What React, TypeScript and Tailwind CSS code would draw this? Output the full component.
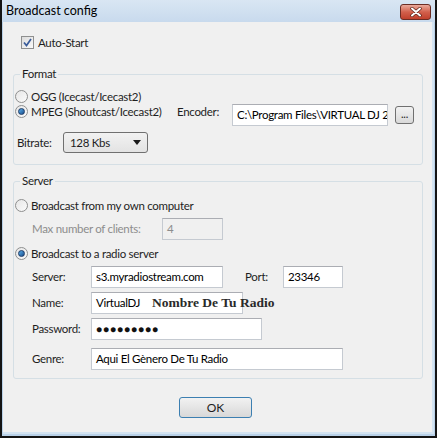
import React from 'react';

const font = { fontFamily: 'Lato, "Noto Sans", sans-serif' };

function Radio({ checked }: { checked?: boolean }) {
  return (
    <span className="w-[13px] h-[13px] rounded-full border border-[#8e8f8f] bg-gradient-to-br from-[#e6e6e6] to-[#fbfbfb] flex items-center justify-center shrink-0">
      {checked && (
        <span className="w-[7px] h-[7px] rounded-full bg-gradient-to-br from-[#5ab0ec] to-[#1b4e8c] border border-[#1c3a66]" />
      )}
    </span>
  );
}

function Field({ w, children, disabled }: { w: string; children?: React.ReactNode; disabled?: boolean }) {
  return (
    <div
      className={`${w} h-[22px] border border-[#c5cad1] border-t-[#abadb3] flex items-center pl-[4px] overflow-hidden whitespace-nowrap shrink-0 ${
        disabled ? 'bg-[#f0f0f0] text-[#8d8d8d]' : 'bg-white text-black'
      }`}
    >
      {children}
    </div>
  );
}

function Group({ label, className, children }: { label: string; className: string; children: React.ReactNode }) {
  return (
    <div className={`relative ml-[10px] w-[410px] border border-[#d5dfe5] rounded-[3px] ${className}`}>
      <span className="absolute -top-[9px] left-[6px] bg-[#f0f0f0] px-[2px] leading-[16px]">{label}</span>
      {children}
    </div>
  );
}

export default function App() {
  return (
    <div
      className="w-[437px] h-[438px] bg-[#141414] pl-[2px] pr-[2px] pb-[2px] text-[11.5px] tracking-[-0.3px] text-[#1e1e1e] whitespace-nowrap"
      style={font}
    >
      <div className="w-full h-full bg-[#b9d1e8] flex flex-col pl-[1px] pr-[1px] pb-[2px]">
        {/* title bar */}
        <div className="h-[22px] -ml-[1px] -mr-[1px] bg-gradient-to-b from-[#d9e6f3] to-[#c8daed] flex items-center justify-between pl-[4px] pr-[4px] shrink-0">
          <span className="text-[12.5px] tracking-normal text-black leading-none">Broadcast config</span>
          <span className="w-[31px] h-[16px] mt-[1px] rounded-[3px] border border-[#6b2d24] bg-gradient-to-b from-[#e9a99b] via-[#d2604c] to-[#c0402c] flex items-center justify-center">
            <svg width="12" height="10" viewBox="0 0 12 10">
              <path d="M2 1.5 L10 8.5 M10 1.5 L2 8.5" stroke="#5b2219" strokeWidth="3.4" strokeLinecap="round" />
              <path d="M2 1.5 L10 8.5 M10 1.5 L2 8.5" stroke="#ffffff" strokeWidth="2" strokeLinecap="round" />
            </svg>
          </span>
        </div>

        {/* client area */}
        <div className="flex-1 bg-[#f0f0f0] border-r-[2px] border-b-[2px] border-[#d3e3f1] flex flex-col">
          <div className="flex items-center gap-[4px] ml-[18px] mt-[14px] h-[13px]">
            <span className="w-[13px] h-[13px] border border-[#8e8f8f] bg-gradient-to-br from-[#dcdcdc] to-[#fafafa] flex items-center justify-center">
              <svg width="9" height="9" viewBox="0 0 9 9">
                <path d="M1 4.5 L3.5 7.5 L8 1" stroke="#3a5c9a" strokeWidth="1.7" fill="none" />
              </svg>
            </span>
            <span>Auto-Start</span>
          </div>

          <Group label="Format" className="mt-[25px] h-[91px]">
            <div className="flex items-center gap-[3px] ml-[1px] mt-[15px] h-[13px]">
              <Radio />
              <span>OGG (Icecast/Icecast2)</span>
            </div>
            <div className="flex items-start mt-[1px] h-[22px]">
              <div className="flex items-center gap-[3px] ml-[1px] mt-[1px] h-[13px] w-[162px] shrink-0">
                <Radio checked />
                <span>MPEG (Shoutcast/Icecast2)</span>
              </div>
              <span className="leading-[15px] w-[55px] shrink-0">Encoder:</span>
              <Field w="w-[156px]">C:\Program Files\VIRTUAL DJ 2</Field>
              <button className="ml-[7px] mt-[2px] w-[19px] h-[18px] shrink-0 rounded-[3px] border border-[#707070] bg-gradient-to-b from-[#f2f2f2] to-[#d9d9d9] text-[11px] leading-none pb-[4px]">
                ...
              </button>
            </div>
            <div className="flex items-center mt-[6px] h-[21px]">
              <span className="ml-[3px] w-[46px]">Bitrate:</span>
              <div className="w-[85px] h-[21px] rounded-[3px] border border-[#707070] bg-gradient-to-b from-[#f2f2f2] to-[#e3e3e3] flex items-center justify-between pl-[6px] pr-[6px]">
                <span>128 Kbs</span>
                <svg width="8" height="5" viewBox="0 0 8 5">
                  <path d="M0 0 H8 L4 5 Z" fill="#1a1a1a" />
                </svg>
              </div>
            </div>
          </Group>

          <Group label="Server" className="mt-[16px] h-[198px]">
            <div className="flex items-center gap-[3px] ml-[1px] mt-[17px] h-[13px]">
              <Radio />
              <span>Broadcast from my own computer</span>
            </div>
            <div className="flex items-center mt-[6px]">
              <span className="ml-[18px] w-[130px] text-[#8d8d8d]">Max number of clients:</span>
              <Field w="w-[61px]" disabled>
                4
              </Field>
            </div>
            <div className="flex items-center gap-[3px] ml-[1px] mt-[7px] h-[13px]">
              <Radio checked />
              <span>Broadcast to a radio server</span>
            </div>
            <div className="flex items-center mt-[6px]">
              <span className="ml-[18px] w-[59px]">Server:</span>
              <Field w="w-[132px]">s3.myradiostream.com</Field>
              <span className="ml-[22px] w-[38px]">Port:</span>
              <Field w="w-[60px]">23346</Field>
            </div>
            <div className="relative flex items-center mt-[4px]">
              <span className="ml-[18px] w-[59px]">Name:</span>
              <Field w="w-[152px]">VirtualDJ</Field>
              <span
                className="absolute left-[138px] top-[3px] text-[13.5px] tracking-normal font-bold text-[#2a2a2a] leading-[16px]"
                style={{ fontFamily: '"Liberation Serif", serif' }}
              >
                Nombre De Tu Radio
              </span>
            </div>
            <div className="flex items-center mt-[4px]">
              <span className="ml-[18px] w-[59px]">Password:</span>
              <Field w="w-[171px]">
                <span className="text-[10px] tracking-[1px] text-[#111]">●●●●●●●●●</span>
              </Field>
            </div>
            <div className="flex items-center mt-[8px]">
              <span className="ml-[18px] w-[59px]">Genre:</span>
              <Field w="w-[252px]">Aqui El Gènero De Tu Radio</Field>
            </div>
          </Group>

          <div className="flex mt-[18px]">
            <button className="ml-[176px] w-[73px] h-[21px] rounded-[3px] border border-[#3c7fb1] bg-gradient-to-b from-[#f2f2f2] to-[#d8d8d8] text-[12px] tracking-normal leading-none">
              OK
            </button>
          </div>
        </div>
      </div>
    </div>
  );
}
